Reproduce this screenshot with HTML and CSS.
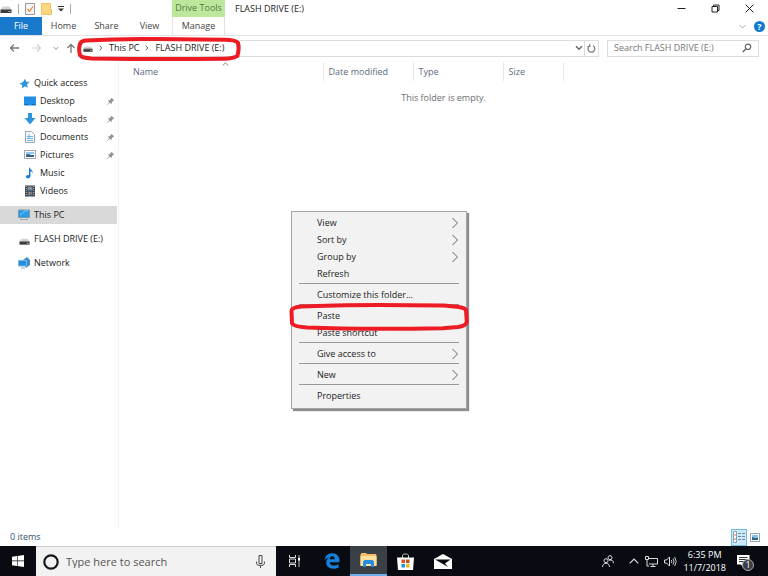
FILE: index.html
```html
<!DOCTYPE html>
<html lang="en">
<head>
<meta charset="utf-8">
<title>FLASH DRIVE (E:)</title>
<link rel="stylesheet" href="styles.css">
</head>
<body>
<svg class="defs" aria-hidden="true">
  <symbol id="drive" viewBox="0 0 12 8"><path d="M2.5 1.5h7L11.5 5H.5z" fill="#d4d4d4"/><path d="M.5 4.500h11V8H.5z" fill="#3d3d3d"/><path d="M1 4.500h10" stroke="#888"/><path d="M8.500 6.500h2" stroke="#b8c8b8"/></symbol>
  <symbol id="pin" viewBox="0 0 10 10"><path d="M6 .8 9.200 4l-1.200.3-1.700 1.700-.2 2L4.300 6.300 1 9.300.7 9l3-3.300L2 4l2-.3L5.700 2z" fill="#8d9297"/></symbol>
  <symbol id="chev" viewBox="0 0 8 12"><path d="M1.500 1 6.500 6l-5 5" fill="none" stroke="#666" stroke-width="1"/></symbol>
</svg>

<header class="top">
  <div class="quick">
    <svg width="12" height="8"><use href="#drive"/></svg>
    <span class="bar"></span>
    <svg width="10" height="12" viewBox="0 0 10 12"><path d="M.5.5h9v11h-9z" fill="#f6f6f6" stroke="#999"/><path d="m2.500 6 2 2.500L8 3.500" fill="none" stroke="#ee8a3c" stroke-width="1.300"/></svg>
    <svg width="11" height="12" viewBox="0 0 11 12"><path d="M.5.5h9v6h1v5H.5z" fill="#fbd77f" stroke="#ecc262"/></svg>
    <svg width="6" height="6" viewBox="0 0 6 6"><path d="M0 .5h6" stroke="#333"/><path d="M0 2.500h6L3 5.500z" fill="#333"/></svg>
    <span class="bar"></span>
  </div>
  <div class="tools">Drive Tools</div>
  <div class="title">
    <h1>FLASH DRIVE (E:)</h1>
    <button aria-label="Minimize"><svg width="9" height="9" viewBox="0 0 9 9"><path d="M.5 4.500h8" stroke="#222"/></svg></button>
    <button aria-label="Restore"><svg width="9" height="9" viewBox="0 0 9 9"><path d="M1 2.500h5.500V8H1zM2.500 2.500V1H8v5.500H6.500" fill="none" stroke="#222"/></svg></button>
    <button aria-label="Close"><svg width="9" height="9" viewBox="0 0 9 9"><path d="m.7.7 7.600 7.600m0-7.600L.7 8.300" stroke="#222"/></svg></button>
  </div>
  <nav class="tabs"><button class="file">File</button><button>Home</button><button>Share</button><button>View</button></nav>
  <button class="manage">Manage</button>
  <div class="help">
    <button aria-label="Expand ribbon"><svg width="7" height="5" viewBox="0 0 7 5"><path d="m.5 1 3 3 3-3" fill="none" stroke="#aaa"/></svg></button>
    <button class="question" aria-label="Help">?</button>
  </div>
</header>

<div class="address">
  <div class="arrows">
    <button aria-label="Back"><svg width="11" height="10" viewBox="0 0 11 10"><path d="M10 5H1.500m3.500-3.500L1.500 5 5 8.500" fill="none" stroke="#777" stroke-width="1.300"/></svg></button>
    <button aria-label="Forward"><svg width="11" height="10" viewBox="0 0 11 10"><path d="M1 5h8.500M6 1.500 9.500 5 6 8.500" fill="none" stroke="#d0d0d0" stroke-width="1.200"/></svg></button>
    <button aria-label="Recent"><svg width="6" height="5" viewBox="0 0 6 5"><path d="m.8 1 2.200 2.500L5.200 1" fill="none" stroke="#999"/></svg></button>
    <button aria-label="Up"><svg width="10" height="11" viewBox="0 0 10 11"><path d="M5 10V1.500M1.500 5 5 1.500 8.500 5" fill="none" stroke="#777" stroke-width="1.300"/></svg></button>
  </div>
  <div class="path">
    <div class="crumbs">
      <svg width="10" height="7"><use href="#drive"/></svg>
      <svg width="4" height="6" viewBox="0 0 4 6"><path d="m.8.8 2 2.200-2 2.200" fill="none" stroke="#666"/></svg>
      <a href="#">This PC</a>
      <svg width="4" height="6" viewBox="0 0 4 6"><path d="m.8.8 2 2.200-2 2.200" fill="none" stroke="#666"/></svg>
      <a href="#">FLASH DRIVE (E:)</a>
      <svg class="mark mark-path" viewBox="0 0 164 24" preserveAspectRatio="none"><path d="M9 3.500Q40 1.500 80 2l68 .8q10 0 13 3 1.500 6-.5 13-4 2.700-13 2.900-60 .8-133-.2-10-.5-11.500-3.500-2-7 .5-12Q5 3.700 9 3.500z"/></svg>
    </div>
    <button class="drop" aria-label="Previous locations"><svg width="8" height="6" viewBox="0 0 8 6"><path d="m1 1.200 3 3 3-3" fill="none" stroke="#666" stroke-width="1.500"/></svg></button>
    <button class="refresh" aria-label="Refresh"><svg width="9" height="9" viewBox="0 0 9 9"><path d="M6 1.800A3.400 3.400 0 1 1 2.500 2M2.800.2v2.300H.5" fill="none" stroke="#777" stroke-width="1.200"/></svg></button>
  </div>
  <label class="find"><input type="text" placeholder="Search FLASH DRIVE (E:)" aria-label="Search FLASH DRIVE (E:)"><svg width="10" height="10" viewBox="0 0 10 10"><circle cx="6" cy="3.800" r="2.700" fill="none" stroke="#666" stroke-width="1.200"/><path d="M4 5.800.8 9" stroke="#666" stroke-width="1.500"/></svg></label>
</div>

<main>
  <nav class="side">
    <a href="#"><svg width="11" height="11" viewBox="0 0 11 11"><path d="m6 .8 1.200 2.900 3.300.1L8 6.200l.8 3.600-3-1.500L3 10.500l.2-3.400L.5 5.500l3.300-1.200z" fill="#2c93dc"/></svg>Quick access</a>
    <a class="sub" href="#"><svg width="12" height="10" viewBox="0 0 12 10"><path d="M0 .5h12v9H0z" fill="#1f8fe3"/><path d="M1 8.500h3m4 0h3" stroke="#1467b0"/></svg>Desktop<svg class="pin"><use href="#pin"/></svg></a>
    <a class="sub" href="#"><svg width="12" height="12" viewBox="0 0 12 12"><path d="M4 0h4v5h3.500L6 11.500.5 5H4z" fill="#2f95df"/></svg>Downloads<svg class="pin"><use href="#pin"/></svg></a>
    <a class="sub" href="#"><svg width="12" height="12" viewBox="0 0 12 12"><path d="M1.500.5h6l3 3v8h-9z" fill="#f7f9fa" stroke="#9ba4aa"/><path d="M3 5.500h6M3 7.500h6M3 9.500h6M5 3v5" stroke="#67b3dc"/></svg>Documents<svg class="pin"><use href="#pin"/></svg></a>
    <a class="sub" href="#"><svg width="12" height="10" viewBox="0 0 12 10"><path d="M.5.5h11v8H.5z" fill="#fff" stroke="#9da5aa"/><path d="M2 2h8v2H2z" fill="#8dcaf0"/><path d="M2 4.500 5 4l2 1h3v2H2z" fill="#32627e"/></svg>Pictures<svg class="pin"><use href="#pin"/></svg></a>
    <a class="sub" href="#"><svg width="12" height="12" viewBox="0 0 12 12"><path d="M5 0c1 2.500 4.500 3 3.500 7C8.500 5 7.500 4.500 6.500 4v5c0 3-4.500 3-4.500.8C2 8.200 4 7.800 5 8.200z" fill="#187dcf"/></svg>Music</a>
    <a class="sub" href="#"><svg width="12" height="12" viewBox="0 0 12 12"><path d="M1 .5h10v11H1z" fill="#3d4247"/><path d="M3.500 1.500h5v4h-5z" fill="#5a93bd"/><path d="M3.500 6.500h5v4h-5z" fill="#44779e"/><path d="m4 4 2-2 1 3M5 10l1-3 2 2" fill="none" stroke="#d78454"/><path d="M2.200 1v10m7.600-10v10" stroke="#c8c8c8" stroke-dasharray="1 1"/></svg>Videos</a>
    <a class="root current" href="#"><svg width="12" height="12" viewBox="0 0 12 12"><path d="M.5 1h11v7.500H.5z" fill="#2a9be8" stroke="#7899ad"/><path d="M2 6 7 2h3" stroke="#78c8f8" fill="none"/><path d="M2 10.500h8" stroke="#91aabd"/></svg>This PC</a>
    <a class="root" href="#"><svg width="12" height="12" viewBox="0 0 12 12"><use href="#drive" x="1" y="4" width="11" height="8"/></svg>FLASH DRIVE (E:)</a>
    <a class="root" href="#"><svg width="12" height="12" viewBox="0 0 12 12"><path d="M5 3 9 0l3 3v5L8 11z" fill="#3f8cc8"/><path d="M.5 3.500h8v5.500h-8z" fill="#2590dd" stroke="#76b6e1"/><path d="M3 11h4" stroke="#8dafc6"/></svg>Network</a>
  </nav>
  <section class="files">
    <table>
      <thead><tr><th class="name">Name<svg class="sort" width="7" height="4" viewBox="0 0 7 4"><path d="m.7 3.500 2.800-2.700 2.800 2.700" fill="none" stroke="#888"/></svg></th><th class="col">Date modified</th><th class="col">Type</th><th class="size">Size</th><th class="rest"></th></tr></thead>
      <tbody><tr><td colspan="5">This folder is empty.</td></tr></tbody>
    </table>
  </section>
  <div class="menu" role="menu">
    <button>View<svg><use href="#chev"/></svg></button>
    <button>Sort by<svg><use href="#chev"/></svg></button>
    <button>Group by<svg><use href="#chev"/></svg></button>
    <button>Refresh</button>
    <hr>
    <button>Customize this folder...</button>
    <hr>
    <button class="paste">Paste<svg class="mark mark-paste" viewBox="0 0 180 28" preserveAspectRatio="none"><path d="M12 3.500Q60 1 155 2.500l15 1.500q6 1 7 3l.8 12q-1 4-9 5l-15 1.200Q70 26.500 18 24.500q-13-1-15-4L2.500 8Q2.500 4.500 12 3.500z"/></svg></button>
    <button>Paste shortcut</button>
    <hr>
    <button>Give access to<svg><use href="#chev"/></svg></button>
    <hr>
    <button>New<svg><use href="#chev"/></svg></button>
    <hr>
    <button>Properties</button>
  </div>
</main>

<footer class="status">
  <span>0 items</span>
  <button class="on" aria-label="Details view"><svg width="12" height="12" viewBox="0 0 12 12"><path d="M.5.5h3v11h-3z" fill="#fff" stroke="#8aa0ae"/><path d="M1 4h2M1 8h2" stroke="#d7775c"/><path d="M5 2.500h3m1 0h3M5 5.500h3m1 0h3M5 8.500h3m1 0h3" stroke="#789"/></svg></button>
  <button aria-label="Thumbnail view"><svg width="10" height="9" viewBox="0 0 10 9"><path d="M.5.5h9v8h-9z" fill="#fff" stroke="#9ba5ac"/><path d="M2 2h6v3H2z" fill="#80c4ed"/><path d="m2 4 3 1h3v2H2z" fill="#356785"/></svg></button>
</footer>

<div class="taskbar">
  <button class="start" aria-label="Start"><svg width="12" height="12" viewBox="0 0 12 12"><path d="m0 1.700 5-.7v4.600H0zM5.600.9 12 0v5.600H5.600zM0 6.300h5V11l-5-.7zm5.600 0H12V12l-6.400-.9z" fill="#fff"/></svg></button>
  <label class="search"><svg width="16" height="16" viewBox="0 0 16 16"><circle cx="8" cy="8" r="6.700" fill="none" stroke="#15191d" stroke-width="2.200"/></svg><input type="text" placeholder="Type here to search" aria-label="Type here to search"><svg width="9" height="13" viewBox="0 0 9 13"><path d="M3 .6h3v8H3z" fill="none" stroke="#444"/><path d="M.6 6.500v2.200c0 2.300 7.800 2.300 7.800 0V6.500M4.500 10.500V13" fill="none" stroke="#444"/></svg></label>
  <button class="app" aria-label="Task view"><svg width="13" height="12" viewBox="0 0 13 12"><path d="M1.500 0v2.500h6V0M1.500 12V9.500h6V12M1.500 4h6v4h-6z" fill="none" stroke="#ddd"/><path d="M11 0v12" stroke="#bbb"/><path d="M10 3h2v2.500h-2z" fill="#fff"/></svg></button>
  <button class="app" aria-label="Edge"><svg width="16" height="16" viewBox="0 0 16 16"><path d="M.5 7.300C1.200 2.800 4 .3 8.200.3c4.700 0 7.300 3.300 7.300 7.300v1.600H5.600c.2 2.300 2.200 3.400 4.500 3.400 1.700 0 3.200-.5 4.500-1.300v3.300c-1.500.8-3.300 1.200-5.200 1.200-4.200 0-7.200-2.400-7.200-6.200 0-2.300 1.200-4.200 3.200-5.400C3.300 4.700 1.600 5.600.5 7.300zm5.200-1h5.100c0-1.900-1-3-2.500-3S5.900 4.500 5.700 6.300z" fill="#1680db"/></svg></button>
  <button class="app active" aria-label="File Explorer"><svg width="17" height="14" viewBox="0 0 17 14"><path d="M.5 1.500 1.500 0H6l1 1h9l.5 1.500v10H.5z" fill="#f0bd68"/><path d="M.5 3h16v10H.5z" fill="#fde09b"/><path d="M3 14V8.500L4.500 7h8L14 8.500V14h-3v-3H6v3z" fill="#268fdd"/></svg></button>
  <button class="app" aria-label="Store"><svg width="17" height="17" viewBox="0 0 17 17"><path d="M5.500 5V2.500C5.500.5 11.500.5 11.500 2.500V5" fill="none" stroke="#ccc"/><path d="M0 4.500h17L16 17H1z" fill="#fff"/><path d="M4.500 6.500H8V10H4.500z" fill="#e44d28"/><path d="M9 6.500h3.500V10H9z" fill="#b5532a"/><path d="M4.500 11H8v3.500H4.500z" fill="#1799dd"/><path d="M9 11h3.500v3.500H9z" fill="#f5b51c"/></svg></button>
  <button class="app" aria-label="Mail"><svg width="18" height="15" viewBox="0 0 18 15"><path d="M0 5 9 0l9 5v10H0z" fill="#fff"/><path d="m1 5.500 15.500 0-5.500 4 3 3.500L8 9.500z" fill="#080c12"/></svg></button>
  <div class="tray">
    <button aria-label="People"><svg width="12" height="12" viewBox="0 0 12 12"><circle cx="8" cy="2.700" r="2" fill="none" stroke="#ddd"/><circle cx="4" cy="5.700" r="2" fill="none" stroke="#ddd"/><path d="M.5 12c0-5 7-5 7 0M7 5.200c3-.8 4.500.8 4.500 3" fill="none" stroke="#ddd"/></svg></button>
    <button class="up" aria-label="Hidden icons"><svg width="10" height="6" viewBox="0 0 10 6"><path d="m.7 5.300 4.300-4.300 4.300 4.300" fill="none" stroke="#ddd" stroke-width="1.200"/></svg></button>
    <button aria-label="Network"><svg width="13" height="11" viewBox="0 0 13 11"><path d="M3 2.500h9.500v5.500H4M8 8v2.500M5.500 10.500h5M.5.500h3v3h-3zM2 4v6h2" fill="none" stroke="#ddd"/></svg></button>
    <button aria-label="Volume"><svg width="13" height="11" viewBox="0 0 13 11"><path d="M.5 4h2L5.500 1v9l-3-3h-2z" fill="none" stroke="#ddd"/><path d="M7.300 4q1 1.500 0 3M9 2.500q2 3 0 6M10.700 1q3 4.500 0 9" fill="none" stroke="#ccc"/></svg></button>
    <time>6:35 PM<br>11/7/2018</time>
    <button class="notes" aria-label="Notifications"><svg width="13" height="13" viewBox="0 0 13 13"><path d="M0 0h12.500v9.500h-6V13L4 9.500H0z" fill="#fff"/><path d="M2 2.500h8.500M2 4.500h8.500M2 6.500h6" stroke="#333"/></svg><span>1</span></button>
  </div>
</div>
</body>
</html>
```
FILE: styles.css
```css
* { box-sizing: border-box; }
body {
  margin: 0;
  height: 100vh;
  display: flex;
  flex-direction: column;
  overflow: hidden;
  background: #fff;
  color: #222;
  font: 9px/12px "Open Sans", "Noto Sans", sans-serif;
}
button, input {
  font: inherit;
  color: inherit;
  background: none;
  border: 0;
  padding: 0;
  margin: 0;
}
a { color: inherit; text-decoration: none; }
svg { display: block; flex: none; }
.defs { display: none; }

.top {
  display: grid;
  grid-template-columns: 172px 53px 1fr;
  grid-template-rows: 17px 18px;
  border-bottom: 1px solid #e3e3e3;
}
.quick { display: flex; align-items: center; gap: 6px; }
.bar { width: 1px; height: 10px; background: #aaa; }
.tools { background: #bce89b; color: #567a4a; text-align: center; line-height: 16px; }
.title { display: flex; align-items: center; padding: 0 2px 0 10px; }
.title h1 { flex: 1; margin: 0; font-size: 9px; font-weight: 400; }
.title button { width: 34px; display: grid; place-items: center; }
.tabs { display: flex; color: #444; }
.tabs button { width: 43px; }
.tabs .file { width: 42px; background: #1979ca; color: #fff; }
.manage { border: solid #e3e3e3; border-width: 0 1px; color: #444; }
.help { display: flex; justify-content: flex-end; align-items: center; gap: 8px; padding-right: 3px; }
.question { width: 11px; height: 11px; border-radius: 50%; background: #0e78d0; color: #fff; font-weight: 700; line-height: 11px; }

.address { display: flex; align-items: center; padding: 3px 9px 0; height: 21px; }
.arrows { display: flex; align-items: center; gap: 11px; width: 69px; }
.arrows button:last-child { margin-left: -4px; }
.path { flex: 1; display: flex; height: 17px; border: 1px solid #dcdcdc; }
.crumbs { position: relative; flex: 1; display: flex; align-items: center; gap: 6px; padding-left: 4px; }
.drop { width: 10px; display: grid; place-items: center; }
.refresh { width: 14px; display: grid; place-items: center; border-left: 1px solid #dcdcdc; }
.find { display: flex; align-items: center; width: 152px; height: 17px; margin-left: 8px; padding: 0 6px; border: 1px solid #dcdcdc; }
.find input { flex: 1; min-width: 0; }
.find input::placeholder { color: #777; opacity: 1; }
.mark { position: absolute; z-index: 1; overflow: visible; fill: none; stroke: #ed1c24; stroke-width: 4; stroke-linejoin: round; }
.mark-path { left: -2px; top: -4px; width: 164px; height: 24px; }

main { position: relative; flex: 1; min-height: 0; display: flex; }
.side { width: 119px; padding: 17px 1px 0 0; border-right: 1px solid #f3f3f3; }
.side a { display: flex; align-items: center; gap: 4px; height: 18px; padding-left: 19px; }
.side a.sub { padding-left: 24px; }
.side a.root { margin-top: 6px; padding-left: 18px; }
.side a.current { background: #d9d9d9; }
.side .pin { width: 9px; height: 9px; margin: 0 2px 0 auto; }
.files { flex: 1; padding-top: 5px; }
table { width: 100%; border-collapse: collapse; table-layout: fixed; }
th { height: 19px; padding: 0 0 0 5px; text-align: left; font-weight: 400; color: #5a6b7c; border-right: 1px solid #e8e8e8; }
th.name { position: relative; width: 204px; padding-left: 14px; }
th.col { width: 90px; }
th.size { width: 60px; }
th.rest { border: 0; }
.sort { position: absolute; left: 103px; top: 0; }
td { padding: 11px 0 0; text-align: center; color: #6d6d6d; }

.menu {
  position: absolute;
  left: 291px;
  top: 154px;
  width: 176px;
  padding: 2px 0 4px;
  display: flex;
  flex-direction: column;
  background: #f2f2f2;
  border: 1px solid #a5a5a5;
  box-shadow: 2px 2px 1px #8d8d8d;
}
.menu button { position: relative; display: flex; align-items: center; justify-content: space-between; height: 17px; padding: 0 7px 0 25px; }
.menu button svg:not(.mark) { width: 8px; height: 12px; }
.menu hr { width: 160px; height: 1px; margin: 1px auto 2px 7px; border: 0; background: #999; }
.menu .paste { z-index: 1; }
.menu .mark-paste { left: -3px; top: -4px; width: 180px; height: 28px; }

.status { display: flex; align-items: center; height: 18px; padding: 0 5px 0 10px; color: #33506b; }
.status span { flex: 1; }
.status button { width: 16px; height: 17px; display: grid; place-items: center; }
.status .on { background: #cbeafb; border: 1px solid #70bce6; }

.taskbar { display: flex; height: 30px; background: #080c12; color: #fff; }
.taskbar button { display: grid; place-items: center; }
.start { width: 36px; }
.search { display: flex; align-items: center; width: 240px; padding: 0 11px 0 7px; background: #f2f2f2; border-top: 1px solid #ccc; }
.search input { flex: 1; min-width: 0; margin-left: 7px; font-size: 11px; color: #333; }
.search input::placeholder { color: #555; opacity: 1; }
.app { width: 37px; }
.active { background: #3b4047; border-bottom: 2px solid #6bb0ea; }
.tray { display: flex; align-items: center; gap: 6px; margin-left: auto; padding-right: 18px; }
.tray .up { margin-left: 9px; }
time { text-align: center; font-size: 9px; line-height: 13px; }
.notes { position: relative; margin-left: 5px; }
.notes span { position: absolute; left: 5px; top: 4px; width: 12px; height: 12px; border: 1px solid #aaa; border-radius: 50%; background: #3a3e43; font-size: 9px; line-height: 10px; text-align: center; }
```
